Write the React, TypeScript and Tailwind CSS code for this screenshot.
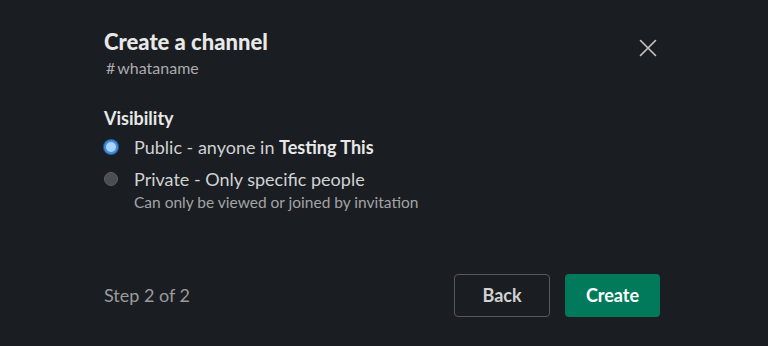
import React from "react";

export default function App() {
  return (
    <div
      className="w-[768px] h-[346px] bg-[#1a1d21] text-[#d1d2d3] overflow-hidden"
      style={{ fontFamily: "Lato, 'Noto Sans', sans-serif" }}
    >
      <div className="ml-[104px] w-[556px] h-full flex flex-col">
        <div className="flex justify-between items-start pt-[28px]">
          <div className="flex flex-col">
            <h1 className="text-[22px] leading-[28px] font-black text-[#e8e8e8]">Create a channel</h1>
            <div className="text-[16px] leading-[20px] text-[#ababad] mt-[2px] ml-[2px]">
              <span className="mr-[2px]">#</span>whataname
            </div>
          </div>
          <button className="mt-[10px] mr-[2px] w-[20px] h-[20px] flex items-center justify-center text-[#c6c7c8]">
            <svg width="18" height="18" viewBox="0 0 18 18" fill="none" stroke="currentColor" strokeWidth="1.6" strokeLinecap="round">
              <path d="M1.5 1.5 L16.5 16.5 M16.5 1.5 L1.5 16.5" />
            </svg>
          </button>
        </div>

        <div className="mt-[28px] text-[18px] leading-[24px] font-bold text-[#e8e8e8]">Visibility</div>

        <div className="mt-[5px] flex flex-col gap-[8px]">
          <label className="flex items-center gap-[16px]">
            <span className="w-[14px] h-[14px] rounded-full border-[2px] border-[#4a8bd8] bg-[#a7d3ff] shadow-[0_0_0_1px_#1d5fa8]" />
            <span className="text-[18px] leading-[24px] text-[#d1d2d3]">
              Public - anyone in <b className="text-[#e8e8e8]">Testing This</b>
            </span>
          </label>
          <div className="flex flex-col">
            <label className="flex items-center gap-[16px]">
              <span className="w-[14px] h-[14px] rounded-full bg-[#4d4e51] border border-[#5e5f62]" />
              <span className="text-[18px] leading-[24px] text-[#d1d2d3]">Private - Only specific people</span>
            </label>
            <div className="ml-[30px] mt-[1px] text-[15.5px] leading-[20px] text-[#a3a4a6]">
              Can only be viewed or joined by invitation
            </div>
          </div>
        </div>

        <div className="mt-auto mb-[29px] flex items-center justify-between">
          <div className="text-[18px] text-[#9a9b9e]">Step 2 of 2</div>
          <div className="flex gap-[15px]">
            <button className="w-[96px] h-[43px] rounded-[4px] border border-[#56585c] bg-transparent text-[18px] font-bold text-[#d1d2d3]">
              Back
            </button>
            <button className="w-[95px] h-[43px] rounded-[4px] bg-[#007a5a] text-[18px] font-bold text-white">
              Create
            </button>
          </div>
        </div>
      </div>
    </div>
  );
}
